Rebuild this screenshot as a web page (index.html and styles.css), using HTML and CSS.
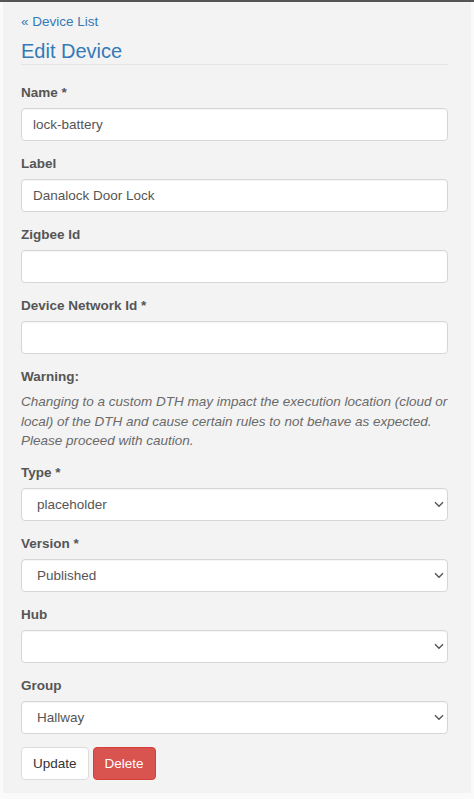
FILE: index.html
```html
<!DOCTYPE html>
<html lang="en">
<head>
<meta charset="utf-8">
<title>Edit Device</title>
<link rel="stylesheet" href="styles.css">
</head>
<body>
<div class="topbar"></div>
<div class="panel">
  <a class="back" href="#">« Device List</a>
  <h1 class="title">Edit Device</h1>
  <form class="form">
    <div class="group">
      <label class="label" for="name">Name *</label>
      <input class="control" id="name" type="text" value="lock-battery">
    </div>
    <div class="group">
      <label class="label" for="lbl">Label</label>
      <input class="control" id="lbl" type="text" value="Danalock Door Lock">
    </div>
    <div class="group">
      <label class="label" for="zig">Zigbee Id</label>
      <input class="control" id="zig" type="text" value="">
    </div>
    <div class="group">
      <label class="label" for="dni">Device Network Id *</label>
      <input class="control" id="dni" type="text" value="">
    </div>
    <div class="group group-warning">
      <div class="label">Warning:</div>
      <p class="warning">Changing to a custom DTH may impact the execution location (cloud or local) of the DTH and cause certain rules to not behave as expected. Please proceed with caution.</p>
    </div>
    <div class="group">
      <label class="label" for="type">Type *</label>
      <div class="select-wrap">
        <select class="control select" id="type"><option>placeholder</option></select>
        <svg class="chev" width="10" height="7" viewBox="0 0 10 7"><path d="M1 1.2 L5 5.2 L9 1.2" fill="none" stroke="#555" stroke-width="1.4"/></svg>
      </div>
    </div>
    <div class="group">
      <label class="label" for="ver">Version *</label>
      <div class="select-wrap">
        <select class="control select" id="ver"><option>Published</option></select>
        <svg class="chev" width="10" height="7" viewBox="0 0 10 7"><path d="M1 1.2 L5 5.2 L9 1.2" fill="none" stroke="#555" stroke-width="1.4"/></svg>
      </div>
    </div>
    <div class="group">
      <label class="label" for="hub">Hub</label>
      <div class="select-wrap">
        <select class="control select" id="hub"><option></option></select>
        <svg class="chev" width="10" height="7" viewBox="0 0 10 7"><path d="M1 1.2 L5 5.2 L9 1.2" fill="none" stroke="#555" stroke-width="1.4"/></svg>
      </div>
    </div>
    <div class="group group-last">
      <label class="label" for="grp">Group</label>
      <div class="select-wrap">
        <select class="control select" id="grp"><option>Hallway</option></select>
        <svg class="chev" width="10" height="7" viewBox="0 0 10 7"><path d="M1 1.2 L5 5.2 L9 1.2" fill="none" stroke="#555" stroke-width="1.4"/></svg>
      </div>
    </div>
    <div class="actions">
      <button class="btn btn-default" type="button">Update</button>
      <button class="btn btn-danger" type="button">Delete</button>
    </div>
  </form>
</div>
</body>
</html>
```

FILE: styles.css
```css
html, body {
  margin: 0;
  padding: 0;
}
body {
  background: #fafafa;
  font-family: "Liberation Sans", Arial, sans-serif;
  font-size: 13.5px;
  color: #555;
}
.topbar {
  height: 2px;
  background: #555;
}
.panel {
  background: #f3f3f3;
  margin: 0 3px;
  padding: 10px 23px 13px 18px;
}
.back {
  display: block;
  color: #337ab7;
  text-decoration: none;
  font-size: 13.5px;
  line-height: 20px;
}
.title {
  margin: 8px 0 0 0;
  font-size: 20px;
  font-weight: normal;
  line-height: 23px;
  color: #337ab7;
  padding-bottom: 1px;
  border-bottom: 1px solid #e3e3e3;
}
.form {
  margin: 19px 0 0 0;
}
.group {
  margin-bottom: 14px;
}
.group-warning {
  margin-bottom: 13px;
}
.group-last {
  margin-bottom: 13px;
}
.label {
  display: block;
  font-weight: bold;
  font-size: 13.5px;
  line-height: 18px;
  margin-bottom: 6px;
  color: #555;
}
.control {
  display: block;
  box-sizing: border-box;
  width: 100%;
  height: 33px;
  margin: 0;
  padding: 0 11px;
  font-family: "Liberation Sans", Arial, sans-serif;
  font-size: 13.5px;
  color: #555;
  background: #fff;
  border: 1px solid #d6d6d6;
  border-radius: 4px;
  box-shadow: inset 0 1px 1px rgba(0,0,0,0.04);
  outline: none;
}
.select-wrap {
  position: relative;
}
.select {
  -webkit-appearance: none;
  appearance: none;
  padding-left: 15px;
  padding-right: 28px;
}
.chev {
  position: absolute;
  right: 4px;
  top: 13px;
  pointer-events: none;
}
.warning {
  margin: 5px 0 0 0;
  font-style: italic;
  line-height: 19.5px;
  color: #6a6a6a;
}
.actions {
  display: flex;
  gap: 4px;
}
.btn {
  height: 33px;
  padding: 0 11px;
  font-family: "Liberation Sans", Arial, sans-serif;
  font-size: 13.5px;
  border-radius: 4px;
  cursor: pointer;
}
.btn-default {
  background: #fff;
  color: #333;
  border: 1px solid #dcdcdc;
}
.btn-danger {
  background: #d9534f;
  color: #fff;
  border: 1px solid #d43f3a;
}
```
